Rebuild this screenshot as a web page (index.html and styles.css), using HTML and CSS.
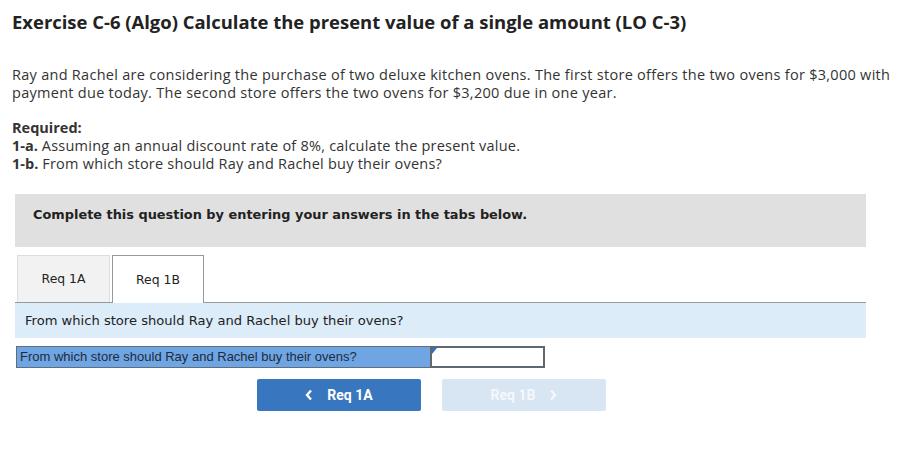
FILE: index.html
```html
<!DOCTYPE html>
<html>
<head>
<meta charset="utf-8">
<link rel="stylesheet" href="styles.css">
</head>
<body>
<div class="page">
  <h1 class="title">Exercise C-6 (Algo) Calculate the present value of a single amount (LO C-3)</h1>
  <p class="intro">Ray and Rachel are considering the purchase of two deluxe kitchen ovens. The first store offers the two ovens for $3,000 with payment due today. The second store offers the two ovens for $3,200 due in one year.</p>
  <div class="required">
    <div class="req-head">Required:</div>
    <div><b>1-a.</b> Assuming an annual discount rate of 8%, calculate the present value.</div>
    <div><b>1-b.</b> From which store should Ray and Rachel buy their ovens?</div>
  </div>
  <div class="notice">Complete this question by entering your answers in the tabs below.</div>
  <div class="tabs">
    <div class="tab">Req 1A</div>
    <div class="tab active">Req 1B</div>
  </div>
  <div class="qbar">From which store should Ray and Rachel buy their ovens?</div>
  <div class="answer">
    <div class="alabel">From which store should Ray and Rachel buy their ovens?</div>
    <div class="ainput"><span class="flag"></span></div>
  </div>
  <div class="nav">
    <div class="btn prev"><svg class="chev" width="8" height="12" viewBox="0 0 8 12"><path d="M6 1.5 L2 6 L6 10.5" fill="none" stroke="currentColor" stroke-width="2.4"/></svg>Req 1A</div>
    <div class="btn next">Req 1B<svg class="chev" width="8" height="12" viewBox="0 0 8 12"><path d="M2 1.5 L6 6 L2 10.5" fill="none" stroke="currentColor" stroke-width="2.4"/></svg></div>
  </div>
</div>
</body>
</html>
```
FILE: styles.css
```css
html, body { margin: 0; padding: 0; background: #fff; }
.page { padding: 11px 0 0 12px; color: #333; font-family: "Open Sans", sans-serif; }
.title { margin: 0; font-size: 18.45px; font-weight: 700; line-height: 22px; color: #222; }
.intro { margin: 33px 0 0 0; font-size: 14.5px; line-height: 18px; width: 884px; letter-spacing: 0.28px; }
.required { margin-top: 17px; font-size: 14.5px; line-height: 18px; letter-spacing: 0.22px; }
.req-head { font-weight: 700; letter-spacing: 0; }
.required b { font-weight: 700; letter-spacing: 0; }
.notice {
  margin: 21px 0 0 3px; width: 851px; height: 53px; box-sizing: border-box;
  background: #e0e0e0; padding: 13px 0 0 18px;
  font-family: "DejaVu Sans", Verdana, sans-serif; font-weight: 700; font-size: 12.9px; color: #222;
}
.tabs { display: flex; gap: 2px; margin: 8px 0 0 5px; height: 47px; }
.tab {
  width: 93px; box-sizing: border-box; background: #f2f2f2; border: 1px solid #ddd; border-bottom: none;
  font-family: "DejaVu Sans", Verdana, sans-serif; font-size: 12.4px; color: #222;
  display: flex; align-items: center; justify-content: center; padding-bottom: 1px;
}
.tab.active { background: #fff; border-color: #999; width: 92px; height: 48px; }
.qbar {
  margin-left: 3px; width: 851px; height: 36px; box-sizing: border-box;
  border-top: 1px solid #999; background: #dcecf9;
  font-family: "DejaVu Sans", Verdana, sans-serif; font-size: 13.1px; color: #222;
  padding: 10px 0 0 10px;
}
.answer { display: flex; margin: 8px 0 0 4px; height: 22px; }
.alabel {
  width: 414px; box-sizing: border-box; background: #70a5e3; border: 1px solid #5e6e80; border-right: none;
  font-family: "Liberation Sans", Arial, sans-serif; font-size: 13px; color: #1c2b3d; padding: 2px 0 0 3px;
}
.ainput { position: relative; width: 115px; box-sizing: border-box; border: 2px solid #5f6870; background: #fff; }
.flag { position: absolute; left: 0; top: 0; width: 0; height: 0; border-top: 6px solid #3a6fb0; border-right: 5px solid transparent; }
.nav { display: flex; gap: 21px; margin: 11px 0 0 245px; }
.btn {
  width: 164px; height: 32px; box-sizing: border-box; border-radius: 2px;
  display: flex; align-items: center; justify-content: center;
  font-family: Roboto, sans-serif; font-weight: 700; font-size: 14px; color: #fff;
}
.prev { background: #3877bf; }
.next { background: #d8e5f3; color: #f4f8fc; }
.prev .chev { margin-right: 14px; }
.next .chev { margin-left: 14px; }
```
